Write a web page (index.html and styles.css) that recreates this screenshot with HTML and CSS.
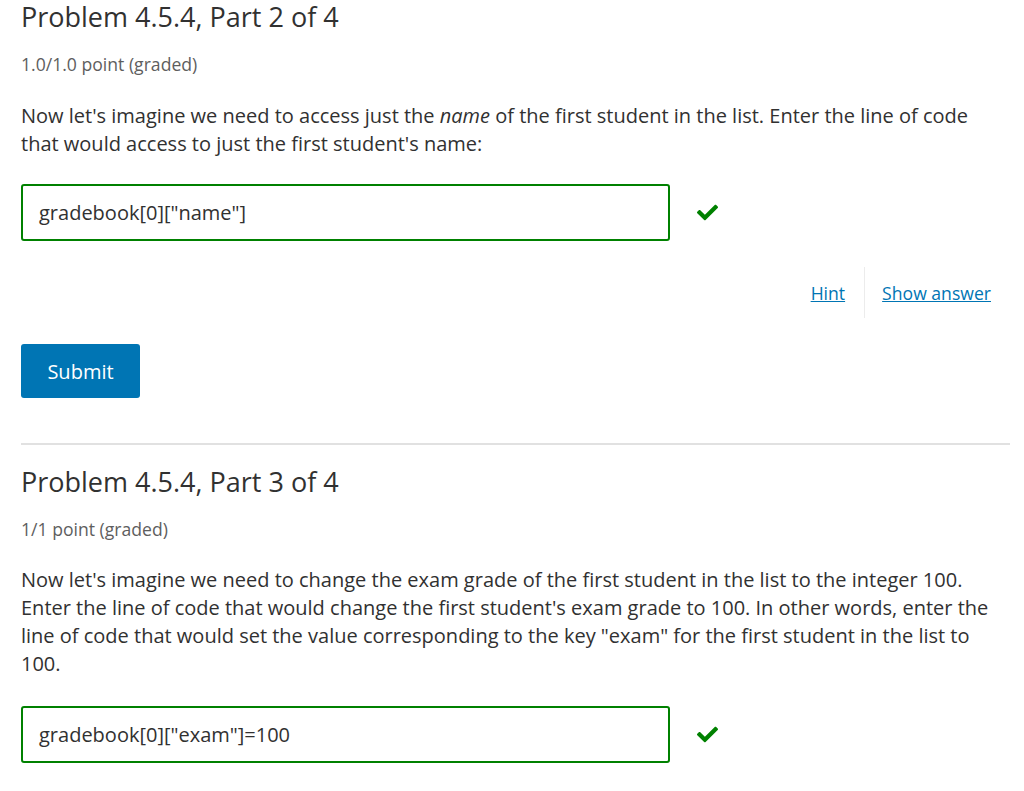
FILE: index.html
```html
<!DOCTYPE html>
<html>
<head>
<meta charset="utf-8">
<link rel="stylesheet" href="styles.css">
</head>
<body>
<div class="page">
  <section class="problem">
    <h3 class="title">Problem 4.5.4, Part 2 of 4</h3>
    <div class="points">1.0/1.0 point (graded)</div>
    <p class="prompt">Now let's imagine we need to access just the <em>name</em> of the first student in the list. Enter the line of code that would access to just the first student's name:</p>
    <div class="answer-row">
      <div class="answer">gradebook[0]["name"]</div>
      <svg class="check" viewBox="0 0 512 512"><path d="M173.898 439.404l-166.4-166.4c-9.997-9.997-9.997-26.206 0-36.204l36.203-36.204c9.997-9.998 26.207-9.998 36.204 0L192 312.690 432.095 72.596c9.997-9.997 26.207-9.997 36.204 0l36.203 36.204c9.997 9.997 9.997 26.206 0 36.204l-294.4 294.401c-9.998 9.997-26.207 9.997-36.204-.001z"/></svg>
    </div>
    <div class="actions">
      <a class="action" href="#">Hint</a>
      <span class="sep"></span>
      <a class="action" href="#">Show answer</a>
    </div>
    <button class="submit">Submit</button>
  </section>
  <hr class="divider">
  <section class="problem second">
    <h3 class="title">Problem 4.5.4, Part 3 of 4</h3>
    <div class="points">1/1 point (graded)</div>
    <p class="prompt">Now let's imagine we need to change the exam grade of the first student in the list to the integer 100. Enter the line of code that would change the first student's exam grade to 100. In other words, enter the line of code that would set the value corresponding to the key "exam" for the first student in the list to 100.</p>
    <div class="answer-row">
      <div class="answer">gradebook[0]["exam"]=100</div>
      <svg class="check" viewBox="0 0 512 512"><path d="M173.898 439.404l-166.4-166.4c-9.997-9.997-9.997-26.206 0-36.204l36.203-36.204c9.997-9.998 26.207-9.998 36.204 0L192 312.690 432.095 72.596c9.997-9.997 26.207-9.997 36.204 0l36.203 36.204c9.997 9.997 9.997 26.206 0 36.204l-294.4 294.401c-9.998 9.997-26.207 9.997-36.204-.001z"/></svg>
    </div>
  </section>
</div>
</body>
</html>
```

FILE: styles.css
```css
html, body {
  margin: 0;
  padding: 0;
  background: #fff;
}
body {
  font-family: "Open Sans", "Noto Sans", sans-serif;
  color: #313131;
  overflow: hidden;
}
.page {
  padding: 0 14px 0 21px;
}
.title {
  margin: 0;
  font-size: 27px;
  font-weight: 400;
  line-height: 34px;
  color: #313131;
}
.points {
  margin-top: 18px;
  font-size: 17.6px;
  line-height: 24px;
  color: #5e5e5e;
}
.prompt {
  margin: 26px 0 0 0;
  font-size: 20px;
  line-height: 27.7px;
  padding-right: 6px;
}
.answer-row {
  display: flex;
  align-items: center;
  margin-top: 27px;
}
.second .prompt {
  margin-top: 25px;
}
.second .answer-row {
  margin-top: 29px;
}
.answer {
  box-sizing: border-box;
  width: 649px;
  height: 57px;
  border: 2px solid #008100;
  border-radius: 3px;
  padding: 0 16px;
  display: flex;
  align-items: center;
  font-size: 20px;
  color: #313131;
}
.check {
  width: 21px;
  height: 21px;
  margin-left: 27px;
  fill: #008100;
}
.actions {
  display: flex;
  justify-content: flex-end;
  align-items: center;
  margin-top: 26px;
  padding-right: 19px;
  height: 51px;
}
.action {
  font-size: 17.6px;
  color: #0075b4;
  text-decoration: underline;
}
.sep {
  width: 1px;
  height: 51px;
  background: #ececec;
  margin: 0 17px 0 19px;
}
.submit {
  display: block;
  margin-top: 26px;
  width: 119px;
  height: 54px;
  background: #0075b4;
  color: #fff;
  border: none;
  border-radius: 3px;
  font-family: "Open Sans", "Noto Sans", sans-serif;
  font-size: 20px;
}
.divider {
  margin: 45px 0 0 0;
  border: none;
  border-top: 2px solid #e1e1e1;
}
.second .title {
  margin-top: 20px;
}
```
